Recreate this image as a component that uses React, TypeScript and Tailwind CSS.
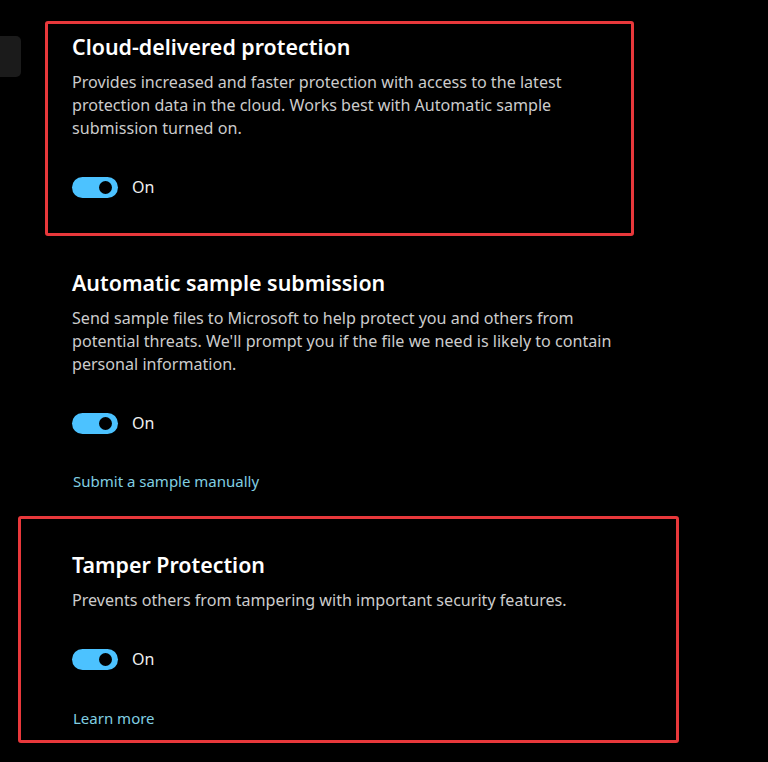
import React from "react";

const font = { fontFamily: '"Noto Sans", "Open Sans", sans-serif' };

function Toggle() {
  return (
    <div className="flex items-center h-[22px]">
      <div className="w-[46px] h-[21px] rounded-full bg-[#4cc2ff] flex items-center justify-end pr-[6px]">
        <div className="w-[13px] h-[13px] rounded-full bg-black" />
      </div>
      <span className="ml-[14px] text-[16px] leading-[22px] text-[#f0f0f0]">On</span>
    </div>
  );
}

function Title({ children }: { children: React.ReactNode }) {
  return <div className="text-[21.4px] leading-[28px] font-semibold text-white">{children}</div>;
}

function Desc({ children }: { children: React.ReactNode }) {
  return <div className="mt-[10px] text-[16.1px] leading-[23px] text-[#cccccc]">{children}</div>;
}

export default function App() {
  return (
    <div className="w-[768px] h-[762px] bg-black overflow-hidden" style={font}>
      <div className="flex items-start">
        <div className="w-[21px] h-[41px] mt-[36px] bg-[#1b1b1b] rounded-r-[5px]" />
        <div className="ml-[24px] mt-[21px] w-[589px] border-[3px] border-[#e8383b] rounded-[3px] pl-[24px] pt-[9px] pb-[35px]">
          <Title>Cloud-delivered protection</Title>
          <Desc>
            Provides increased and faster protection with access to the latest
            <br />
            protection data in the cloud. Works best with Automatic sample
            <br />
            submission turned on.
          </Desc>
          <div className="mt-[36px]">
            <Toggle />
          </div>
        </div>
      </div>

      <div className="ml-[72px] mt-[33px]">
        <Title>Automatic sample submission</Title>
        <Desc>
          Send sample files to Microsoft to help protect you and others from
          <br />
          potential threats. We'll prompt you if the file we need is likely to contain
          <br />
          personal information.
        </Desc>
        <div className="mt-[36px]">
          <Toggle />
        </div>
        <div className="mt-[36px] ml-[1px] text-[15px] leading-[22px] text-[#80cfe2]">Submit a sample manually</div>
      </div>

      <div className="ml-[18px] mt-[24px] w-[661px] border-[3px] border-[#e8383b] rounded-[3px] pl-[51px] pt-[32px] pb-[11px]">
        <Title>Tamper Protection</Title>
        <Desc>Prevents others from tampering with important security features.</Desc>
        <div className="mt-[36px]">
          <Toggle />
        </div>
        <div className="mt-[37px] ml-[1px] text-[15px] leading-[22px] text-[#80cfe2]">Learn more</div>
      </div>
    </div>
  );
}
